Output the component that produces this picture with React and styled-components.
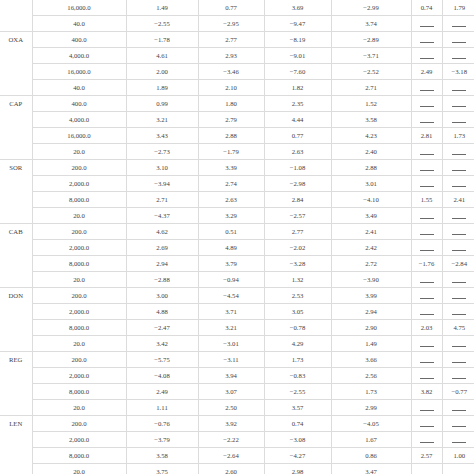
import React from "react";
import styled, { createGlobalStyle } from "styled-components";

const Global = createGlobalStyle`
  html, body { margin: 0; padding: 0; background: #ffffff; }
  body { overflow: hidden; }
`;

const Wrap = styled.div`
  width: 474px;
  height: 474px;
  overflow: hidden;
`;

const Table = styled.table`
  border-collapse: collapse;
  table-layout: fixed;
  width: 476px;
  margin-top: -1px;
  font-family: "Liberation Serif", "Times New Roman", serif;
  font-size: 6.7px;
  color: #444444;
`;

const Row = styled.tr``;

const Cell = styled.td`
  padding: 0;
  height: 15px;
  text-align: center;
  vertical-align: middle;
  white-space: nowrap;
  border-top: 1px solid #dcdcdc;
  border-bottom: 1px solid #dcdcdc;
  border-left: 1px solid #dcdcdc;
  line-height: 15px;
`;

const GroupCell = styled(Cell)`
  border-left: none;
  vertical-align: top;
`;

const DashCell = styled(Cell)`
  vertical-align: top;
  line-height: 0;
`;

const Dash = styled.span`
  display: block;
  margin: 10px auto 0;
  width: 14px;
  height: ${(p) => (p.$bold ? "2px" : "1px")};
  background: ${(p) => (p.$bold ? "#8a8a8a" : "#6a6a6a")};
`;

const widths = [32, 94, 72, 66, 67, 80, 31, 34];

const groups = [
  { label: "", rows: [
    ["16,000.0", "1.49", "0.77", "3.69", "−2.99", "0.74", "1.79"],
    ["40.0", "−2.55", "−2.95", "−9.47", "3.74", null, null],
  ]},
  { label: "OXA", rows: [
    ["400.0", "−1.78", "2.77", "−8.19", "−2.89", null, null],
    ["4,000.0", "4.61", "2.93", "−9.01", "−3.71", null, null],
    ["16,000.0", "2.00", "−3.46", "−7.60", "−2.52", "2.49", "−3.18"],
    ["40.0", "1.89", "2.10", "1.82", "2.71", null, null],
  ]},
  { label: "CAP", rows: [
    ["400.0", "0.99", "1.80", "2.35", "1.52", null, null],
    ["4,000.0", "3.21", "2.79", "4.44", "3.58", null, null],
    ["16,000.0", "3.43", "2.88", "0.77", "4.23", "2.81", "1.73"],
    ["20.0", "−2.73", "−1.79", "2.63", "2.40", null, null],
  ]},
  { label: "SOR", rows: [
    ["200.0", "3.10", "3.39", "−1.08", "2.88", null, null],
    ["2,000.0", "−3.94", "2.74", "−2.98", "3.01", null, null],
    ["8,000.0", "2.71", "2.63", "2.84", "−4.10", "1.55", "2.41"],
    ["20.0", "−4.37", "3.29", "−2.57", "3.49", null, null],
  ]},
  { label: "CAB", rows: [
    ["200.0", "4.62", "0.51", "2.77", "2.41", null, null],
    ["2,000.0", "2.69", "4.89", "−2.02", "2.42", null, null],
    ["8,000.0", "2.94", "3.79", "−3.28", "2.72", "−1.76", "−2.84"],
    ["20.0", "−2.88", "−0.94", "1.32", "−3.90", null, null],
  ]},
  { label: "DON", rows: [
    ["200.0", "3.00", "−4.54", "2.53", "3.99", null, null],
    ["2,000.0", "4.88", "3.71", "3.05", "2.94", null, null],
    ["8,000.0", "−2.47", "3.21", "−0.78", "2.90", "2.03", "4.75"],
    ["20.0", "3.42", "−3.01", "4.29", "1.49", null, null],
  ]},
  { label: "REG", rows: [
    ["200.0", "−5.75", "−3.11", "1.73", "3.66", null, null],
    ["2,000.0", "−4.08", "3.94", "−0.83", "2.56", null, null],
    ["8,000.0", "2.49", "3.07", "−2.55", "1.73", "3.82", "−0.77"],
    ["20.0", "1.11", "2.50", "3.57", "2.99", null, null],
  ]},
  { label: "LEN", rows: [
    ["200.0", "−0.76", "3.92", "0.74", "−4.05", null, null],
    ["2,000.0", "−3.79", "−2.22", "−3.08", "1.67", null, null],
    ["8,000.0", "3.58", "−2.64", "−4.27", "0.86", "2.57", "1.00"],
    ["20.0", "3.75", "2.60", "2.98", "3.47", null, null],
  ]},
];

export default function App() {
  const lastGroup = groups.length - 1;
  return (
    <Wrap>
      <Global />
      <Table>
        <colgroup>
          {widths.map((w, i) => (
            <col key={i} style={{ width: w }} />
          ))}
        </colgroup>
        <tbody>
          {groups.map((g, gi) =>
            g.rows.map((r, ri) => {
              const isLast = gi === lastGroup && ri === g.rows.length - 1;
              return (
                <Row key={`${gi}-${ri}`}>
                  {ri === 0 && <GroupCell rowSpan={g.rows.length}>{g.label}</GroupCell>}
                  {r.map((v, ci) =>
                    v === null ? (
                      <DashCell key={ci}>
                        <Dash $bold={isLast} />
                      </DashCell>
                    ) : (
                      <Cell key={ci}>{v}</Cell>
                    )
                  )}
                </Row>
              );
            })
          )}
        </tbody>
      </Table>
    </Wrap>
  );
}
